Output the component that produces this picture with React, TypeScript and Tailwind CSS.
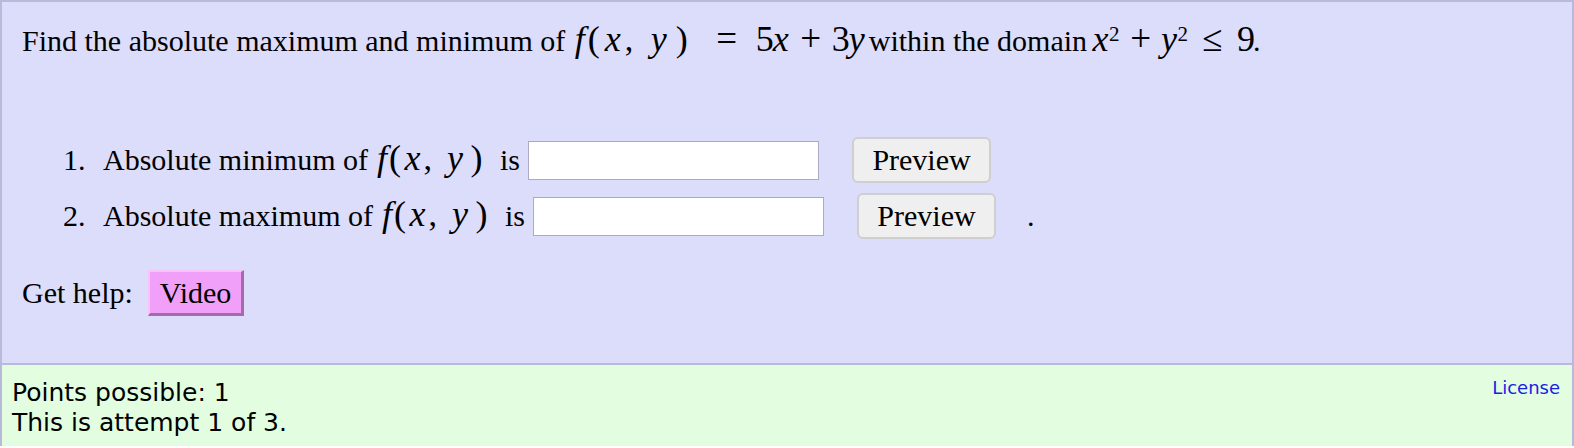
import React from 'react'

// math glyph cells: fixed-width boxes so the formula keeps the typeset spacing
function V({ c, className = '' }: { c: string; className?: string }) {
  return <i className={`inline-block text-center text-[36px] leading-[28px] ${className}`}>{c}</i>
}

function O({ c, className = '' }: { c: string; className?: string }) {
  return <span className={`inline-block text-center text-[36px] leading-[28px] ${className}`}>{c}</span>
}

function Fxy({ wide }: { wide?: boolean }) {
  if (wide) {
    return (
      <span className="whitespace-nowrap">
        <V c="f" className="w-[14px]" />
        <O c="(" className="w-[14px]" />
        <V c="x" className="w-[24px]" />
        <span className="inline-block w-[10px] text-left text-[34px] leading-[28px]">,</span>
        <span className="inline-block w-[10px]" />
        <V c="y" className="w-[28px]" />
        <O c=")" className="w-[25px] text-left pl-[3px]" />
      </span>
    )
  }
  return (
    <span className="whitespace-nowrap">
      <V c="f" className="w-[13px]" />
      <O c="(" className="w-[13px]" />
      <V c="x" className="w-[22px]" />
      <span className="inline-block w-[10px] text-left text-[34px] leading-[28px]">,</span>
      <span className="inline-block w-[8px]" />
      <V c="y" className="w-[27px]" />
      <O c=")" className="w-[24px] text-left pl-[2px]" />
    </span>
  )
}

function Preview({ className = '' }: { className?: string }) {
  return (
    <button
      type="button"
      className={`w-[139px] h-[46px] rounded-[6px] border-2 border-[#cfcfcf] bg-[#efefef] text-[30px] leading-[34px] text-black ${className}`}
    >
      Preview
    </button>
  )
}

function AnswerRow({ n, word, last }: { n: number; word: string; last?: boolean }) {
  return (
    <div className="flex items-center h-[56px] pl-[41px]">
      <span className="w-[22px]">{n}.</span>
      <span className="ml-[18px] whitespace-nowrap">
        Absolute {word} of <Fxy /> is
      </span>
      <input
        type="text"
        className="ml-[8px] w-[291px] h-[39px] border border-[#aaaac4] bg-white outline-none"
      />
      <Preview className="ml-[33px]" />
      {last && <span className="ml-[31px]">.</span>}
    </div>
  )
}

export default function App() {
  return (
    <div className="w-[1574px] bg-white">
      <div className="border-2 border-b-0 border-[#b9b9dc] text-black">
        <div className="h-[361px] bg-[#dcdcfb] px-[20px] pt-[22px] font-['Liberation_Serif',serif] text-[30px] leading-[34px]">
          <p className="whitespace-nowrap">
            Find the absolute maximum and minimum of <Fxy wide />
            <O c="=" className="w-[58px] text-[37px]" />
            <O c="5" className="w-[16px] text-[31px]" />
            <V c="x" className="w-[18px]" />
            <O c="+" className="w-[42px] text-[37px]" />
            <O c="3" className="w-[17px] text-[31px]" />
            <V c="y" className="w-[15px]" />
            <span className="ml-[5px]">within the domain</span>
            <V c="x" className="ml-[5px] w-[17px]" />
            <sup className="text-[21px]">2</sup>
            <O c="+" className="ml-[1px] w-[40px] text-[37px]" />
            <V c="y" className="w-[17px]" />
            <sup className="text-[21px]">2</sup>
            <O c="≤" className="ml-[2px] w-[44px] text-[37px]" />
            <O c="9" className="ml-[3px] w-[16px] text-[31px]" />
            <span>.</span>
          </p>

          <div className="mt-[74px]">
            <AnswerRow n={1} word="minimum" />
            <AnswerRow n={2} word="maximum" last />
          </div>

          <div className="mt-[21px] flex items-center h-[56px]">
            <span>Get help:</span>
            <button
              type="button"
              className="ml-[15px] h-[46px] px-[10px] bg-[#f0a0f8] border-2 border-t-[#f6c4f9] border-l-[#f6c4f9] border-b-[3px] border-r-[3px] border-b-[#a56aa8] border-r-[#a56aa8] text-[30px] leading-[34px]"
            >
              Video
            </button>
          </div>
        </div>

        <div className="h-[83px] border-t-2 border-[#b9b9dc] bg-[#e2fde0] pl-[10px] pr-[12px] pt-[12px] flex justify-between items-start font-['DejaVu_Sans',sans-serif]">
          <div className="pt-[1px] text-[25px] leading-[30px]">
            <div>Points possible: 1</div>
            <div>This is attempt 1 of 3.</div>
          </div>
          <a className="text-[18px] leading-[22px] text-[#1c1ce6]">License</a>
        </div>
      </div>
    </div>
  )
}
